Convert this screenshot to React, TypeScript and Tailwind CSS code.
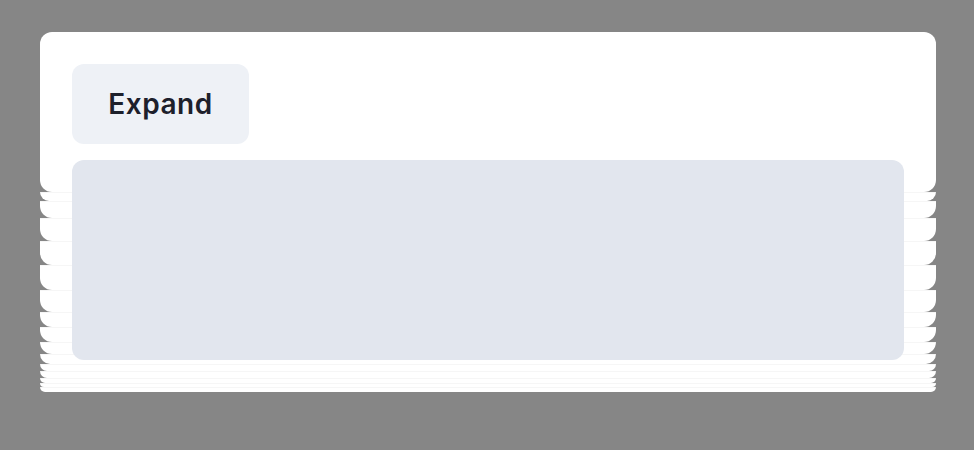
const FRAMES = [9, 17, 23, 24, 25, 22, 15, 15, 12, 10, 7, 7, 5, 4, 5];

export default function App() {
  return (
    <div className="h-[450px] w-full bg-[#868686] pt-8 pl-10" style={{ fontFamily: "Inter, 'Noto Sans', sans-serif" }}>
      <div className="grid w-[896px]">
        <div className="[grid-area:1/1] flex flex-col">
          <div className="h-[160px] rounded-xl bg-white" />
          {FRAMES.map((h, i) => (
            <div key={i} className="rounded-b-xl border-t border-[#f6f6f6] bg-white" style={{ height: h }} />
          ))}
        </div>
        <div className="[grid-area:1/1] flex flex-col gap-4 p-8">
          <button className="flex h-20 w-[177px] items-center justify-center rounded-xl bg-[#eef1f6] text-[28px] font-semibold tracking-[0.5px] text-[#1d202b]">
            Expand
          </button>
          <div className="h-[200px] rounded-xl bg-[#e2e6ee]" />
        </div>
      </div>
    </div>
  );
}
